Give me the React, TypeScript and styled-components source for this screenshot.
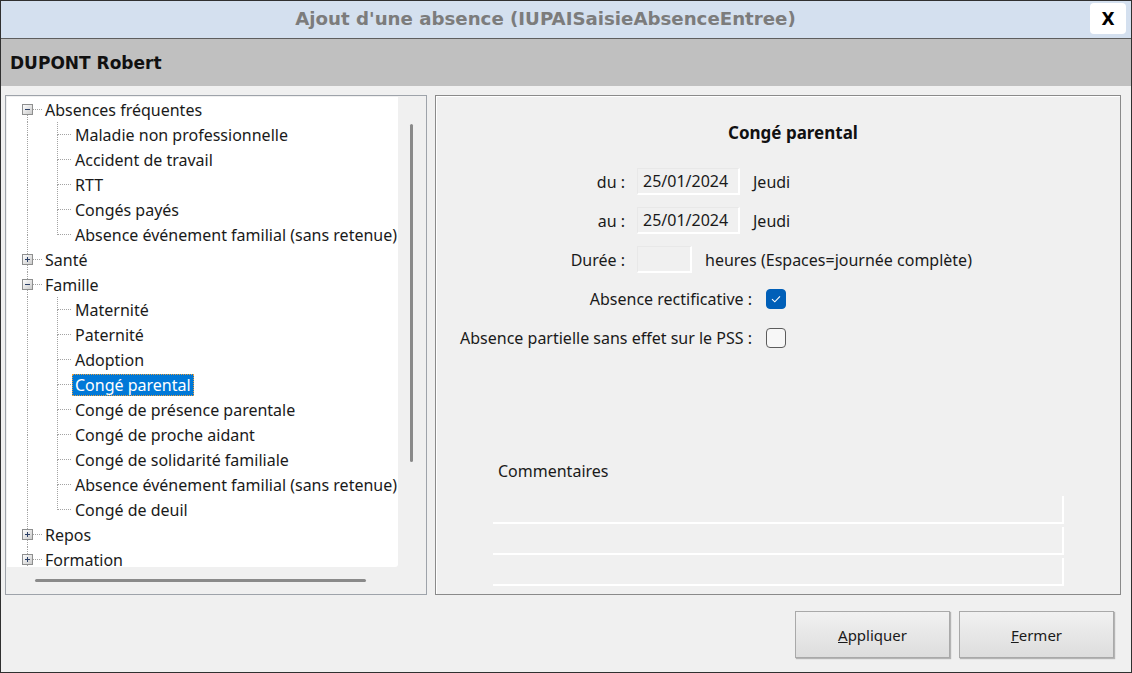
import React from "react";
import styled, { createGlobalStyle } from "styled-components";

const Global = createGlobalStyle`
  html, body { margin: 0; padding: 0; background: #f0f0f0; }
  * { box-sizing: border-box; }
`;

const UI_FONT = `"Noto Sans", "Open Sans", sans-serif`;
const BOLD_FONT = `"DejaVu Sans", "Noto Sans", sans-serif`;

const Window = styled.div`
  width: 1132px;
  height: 673px;
  border: 1px solid #303030;
  background: #f0f0f0;
  display: flex;
  flex-direction: column;
  font-family: ${UI_FONT};
  overflow: hidden;
`;

const TitleBar = styled.div`
  height: 38px;
  flex: none;
  background: #d4e0ef;
  border-bottom: 1px solid #5e5e5e;
  display: flex;
  align-items: flex-start;
  padding-right: 5px;
`;

const TitleText = styled.div`
  flex: 1;
  text-align: center;
  font-family: ${BOLD_FONT};
  font-weight: bold;
  font-size: 18.2px;
  color: #7c7c7c;
  line-height: 36px;
`;

const CloseButton = styled.div`
  margin-top: 2px;
  width: 36px;
  height: 31px;
  background: #ffffff;
  border-radius: 4px;
  display: flex;
  align-items: center;
  justify-content: center;
  font-family: ${BOLD_FONT};
  font-weight: bold;
  font-size: 17px;
  color: #000;
`;

const Header = styled.div`
  height: 47px;
  flex: none;
  background: #c0c0c0;
  display: flex;
  align-items: center;
  padding-left: 9px;
  font-family: ${BOLD_FONT};
  font-weight: bold;
  font-size: 17px;
  color: #111;
`;

const Body = styled.div`
  flex: 1;
  display: flex;
  flex-direction: column;
  padding: 9px 10px 0 4px;
`;

const Panels = styled.div`
  display: flex;
  gap: 8px;
  height: 500px;
`;

const TreePanel = styled.div`
  width: 422px;
  border: 1px solid #9ea3aa;
  padding: 1px;
  background: #f0f0f0;
  display: grid;
  grid-template-columns: 1fr 27px;
  grid-template-rows: 1fr 26px;
`;

const TreeView = styled.div`
  background: #ffffff;
  overflow: hidden;
  padding-left: 5px;
  border-bottom-right-radius: 3px;
`;

const Row = styled.div`
  height: 25px;
  display: flex;
  align-items: center;
`;

const Label = styled.span<{ $selected?: boolean }>`
  font-size: 16px;
  line-height: 22px;
  padding: 0 3px;
  white-space: nowrap;
  color: ${(p) => (p.$selected ? "#ffffff" : "#1a1a1a")};
  background: ${(p) => (p.$selected ? "#0078d7" : "transparent")};
  outline: ${(p) => (p.$selected ? "1px dotted #e7a040" : "none")};
  outline-offset: -1px;
`;

const VScroll = styled.div`
  display: flex;
  justify-content: center;
  padding-top: 27px;
`;

const VThumb = styled.div`
  width: 3px;
  height: 338px;
  background: #8a8a8a;
  border-radius: 2px;
`;

const HScroll = styled.div`
  display: flex;
  align-items: center;
  padding-left: 28px;
`;

const HThumb = styled.div`
  height: 3px;
  width: 331px;
  background: #8a8a8a;
  border-radius: 2px;
`;

const DetailPanel = styled.div`
  flex: 1;
  border: 1px solid #8a8a8a;
  box-shadow: inset 1px 1px 0 #ffffff;
  display: flex;
  flex-direction: column;
  padding: 25px 0 0 19px;
  font-size: 16px;
  color: #1a1a1a;
`;

const DetailTitle = styled.div`
  font-family: ${UI_FONT};
  font-weight: bold;
  font-size: 17px;
  line-height: 24px;
  padding-left: 273px;
  color: #111;
  margin-bottom: 17px;
`;

const FormRow = styled.div`
  height: 39px;
  display: flex;
  align-items: center;
`;

const FormLabel = styled.div<{ $width: number; $gap: number }>`
  width: ${(p) => p.$width}px;
  margin-right: ${(p) => p.$gap}px;
  text-align: right;
  white-space: nowrap;
`;

const InputBox = styled.div<{ $width: number }>`
  width: ${(p) => p.$width}px;
  height: 27px;
  border-style: solid;
  border-width: 1px 2px 2px 1px;
  border-color: #e8e8e8 #ffffff #ffffff #e8e8e8;
  padding-left: 5px;
  display: flex;
  align-items: center;
  margin-right: 13px;
  white-space: nowrap;
`;

const CheckBox = styled.div<{ $checked?: boolean }>`
  width: 20px;
  height: 20px;
  border-radius: 4px;
  display: flex;
  align-items: center;
  justify-content: center;
  background: ${(p) => (p.$checked ? "#005fb8" : "#f7f7f7")};
  border: 1px solid ${(p) => (p.$checked ? "#005fb8" : "#5c5c5c")};
`;

const Comments = styled.div`
  margin-top: 104px;
  margin-left: 38px;
  width: 571px;
  display: flex;
  flex-direction: column;
  gap: 3px;
`;

const CommentsLabel = styled.div`
  padding-left: 5px;
  line-height: 20px;
  margin-bottom: 12px;
`;

const CommentLine = styled.div`
  height: 28px;
  border-right: 2px solid #ffffff;
  border-bottom: 2px solid #ffffff;
`;

const Footer = styled.div`
  display: flex;
  justify-content: flex-end;
  gap: 9px;
  padding: 16px 7px 0 0;
`;

const Button = styled.div`
  width: 155px;
  height: 47px;
  border: 1px solid #a9a9a9;
  background: linear-gradient(#f1f1f1, #dddddd);
  box-shadow: 1px 1px 1px rgba(0, 0, 0, 0.25);
  display: flex;
  align-items: center;
  justify-content: center;
  font-size: 15px;
  color: #1a1a1a;
`;

const LINE = "#a3a3a3";

type ConnProps = { top?: boolean; bottom?: boolean; branch?: boolean };

const Connector: React.FC<ConnProps> = ({ top, bottom, branch }) => (
  <svg width="30" height="25" style={{ flex: "none", display: "block" }} shapeRendering="crispEdges">
    {top && <line x1="15.5" y1="0" x2="15.5" y2="13" stroke={LINE} strokeDasharray="1 1" />}
    {bottom && <line x1="15.5" y1="13" x2="15.5" y2="25" stroke={LINE} strokeDasharray="1 1" />}
    {branch && <line x1="16" y1="12.5" x2="30" y2="12.5" stroke={LINE} strokeDasharray="1 1" />}
  </svg>
);

const Expander: React.FC<{ open: boolean; top: boolean }> = ({ open, top }) => (
  <svg width="30" height="25" style={{ flex: "none", display: "block" }} shapeRendering="crispEdges">
    <defs>
      <linearGradient id="exp" x1="0" y1="0" x2="1" y2="1">
        <stop offset="0" stopColor="#ffffff" />
        <stop offset="1" stopColor="#c9c9c9" />
      </linearGradient>
    </defs>
    {top && <line x1="15.5" y1="0" x2="15.5" y2="8" stroke={LINE} strokeDasharray="1 1" />}
    <line x1="15.5" y1="18" x2="15.5" y2="25" stroke={LINE} strokeDasharray="1 1" />
    <line x1="21" y1="12.5" x2="30" y2="12.5" stroke={LINE} strokeDasharray="1 1" />
    <rect x="10.5" y="7.5" width="10" height="10" rx="1" fill="url(#exp)" stroke="#8e8f8f" />
    <line x1="13" y1="12.5" x2="18" y2="12.5" stroke="#2b3f66" />
    {!open && <line x1="15.5" y1="10" x2="15.5" y2="15" stroke="#2b3f66" />}
  </svg>
);

const Check: React.FC = () => (
  <svg width="12" height="10" viewBox="0 0 12 10">
    <path d="M2 5.2 L4.8 7.8 L10 2.4" fill="none" stroke="#ffffff" strokeWidth="1.1" />
  </svg>
);

type Node = { label: string; open?: boolean; children?: string[] };

const tree: Node[] = [
  {
    label: "Absences fréquentes",
    open: true,
    children: [
      "Maladie non professionnelle",
      "Accident de travail",
      "RTT",
      "Congés payés",
      "Absence événement familial (sans retenue)",
    ],
  },
  { label: "Santé" },
  {
    label: "Famille",
    open: true,
    children: [
      "Maternité",
      "Paternité",
      "Adoption",
      "Congé parental",
      "Congé de présence parentale",
      "Congé de proche aidant",
      "Congé de solidarité familiale",
      "Absence événement familial (sans retenue)",
      "Congé de deuil",
    ],
  },
  { label: "Repos" },
  { label: "Formation" },
];

const SELECTED = "Congé parental";

const Tree: React.FC = () => (
  <TreeView>
    {tree.map((node, i) => (
      <React.Fragment key={node.label}>
        <Row>
          <Expander open={!!node.open} top={i > 0} />
          <Label>{node.label}</Label>
        </Row>
        {node.open &&
          node.children?.map((child, j) => (
            <Row key={child + j}>
              <Connector top bottom />
              <Connector top bottom={j < (node.children?.length ?? 0) - 1} branch />
              <Label $selected={child === SELECTED}>{child}</Label>
            </Row>
          ))}
      </React.Fragment>
    ))}
  </TreeView>
);

export default function App() {
  return (
    <>
      <Global />
      <Window>
        <TitleBar>
          <TitleText>Ajout d'une absence (IUPAISaisieAbsenceEntree)</TitleText>
          <CloseButton>X</CloseButton>
        </TitleBar>
        <Header>DUPONT Robert</Header>
        <Body>
          <Panels>
            <TreePanel>
              <Tree />
              <VScroll>
                <VThumb />
              </VScroll>
              <HScroll>
                <HThumb />
              </HScroll>
              <div />
            </TreePanel>
            <DetailPanel>
              <DetailTitle>Congé parental</DetailTitle>
              <FormRow>
                <FormLabel $width={170} $gap={12}>du :</FormLabel>
                <InputBox $width={103}>25/01/2024</InputBox>
                <span>Jeudi</span>
              </FormRow>
              <FormRow>
                <FormLabel $width={170} $gap={12}>au :</FormLabel>
                <InputBox $width={103}>25/01/2024</InputBox>
                <span>Jeudi</span>
              </FormRow>
              <FormRow>
                <FormLabel $width={170} $gap={12}>Durée :</FormLabel>
                <InputBox $width={55} />
                <span>heures (Espaces=journée complète)</span>
              </FormRow>
              <FormRow>
                <FormLabel $width={297} $gap={14}>Absence rectificative :</FormLabel>
                <CheckBox $checked>
                  <Check />
                </CheckBox>
              </FormRow>
              <FormRow>
                <FormLabel $width={297} $gap={14}>Absence partielle sans effet sur le PSS :</FormLabel>
                <CheckBox />
              </FormRow>
              <Comments>
                <CommentsLabel>Commentaires</CommentsLabel>
                <CommentLine />
                <CommentLine />
                <CommentLine />
              </Comments>
            </DetailPanel>
          </Panels>
          <Footer>
            <Button>
              <span>
                <u>A</u>ppliquer
              </span>
            </Button>
            <Button>
              <span>
                <u>F</u>ermer
              </span>
            </Button>
          </Footer>
        </Body>
      </Window>
    </>
  );
}
